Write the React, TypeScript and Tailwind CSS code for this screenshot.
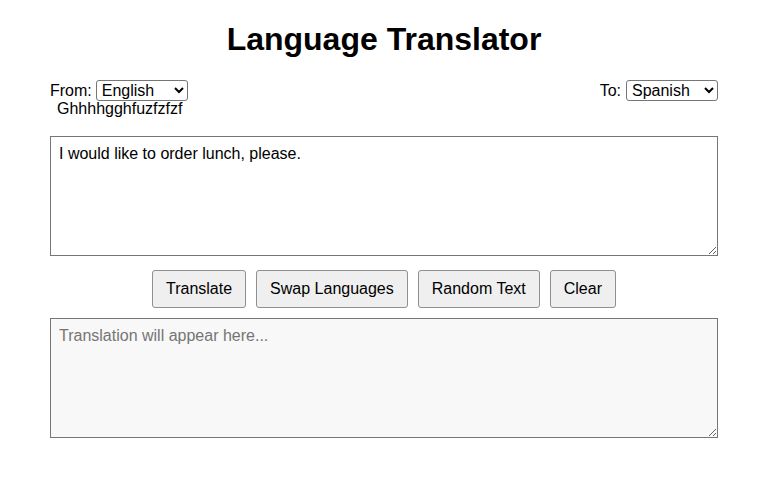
import React, { useState } from 'react';

const languages = ['English', 'Spanish', 'French', 'German', 'Italian'];

export default function App() {
  const [from, setFrom] = useState('English');
  const [to, setTo] = useState('Spanish');
  const [text, setText] = useState('I would like to order lunch, please.');
  const [output, setOutput] = useState('');

  const btn =
    'h-[38px] px-[13px] border border-[#8f8f8f] rounded-[3px] bg-[#efefef] text-[16px] text-black hover:bg-[#e5e5e5]';
  const sel =
    'h-[21px] border border-[#767676] rounded-[3px] bg-white text-[16px] leading-none pl-[1px] text-black';

  return (
    <div className="min-h-[480px] bg-white text-black px-[50px] pt-[21px] font-['Liberation_Sans',Arial,sans-serif]">
      <h1 className="text-center text-[32px] font-bold leading-[37px]">Language Translator</h1>

      <div className="mt-[22px] flex justify-between items-start">
        <div className="w-[140px] text-[16px] leading-[20px]">
          <label className="mr-[4px]">From:</label>
          <select className={`${sel} w-[92px]`} value={from} onChange={e => setFrom(e.target.value)}>
            {languages.map(l => (
              <option key={l}>{l}</option>
            ))}
          </select>
          <div className="ml-[7px] leading-[18px] mt-[-1px]">Ghhhhgghfuzfzfzf</div>
        </div>
        <div className="text-[16px] leading-[20px]">
          <label className="mr-[5px]">To:</label>
          <select className={`${sel} w-[92px]`} value={to} onChange={e => setTo(e.target.value)}>
            {languages.map(l => (
              <option key={l}>{l}</option>
            ))}
          </select>
        </div>
      </div>

      <textarea
        className="mt-[18px] block w-full h-[120px] border border-[#767676] p-[8px] text-[16px] leading-[18px] bg-white"
        value={text}
        onChange={e => setText(e.target.value)}
      />

      <div className="mt-[14px] flex justify-center gap-[10px]">
        <button className={btn} onClick={() => setOutput(text)}>Translate</button>
        <button
          className={btn}
          onClick={() => {
            setFrom(to);
            setTo(from);
          }}
        >
          Swap Languages
        </button>
        <button className={btn} onClick={() => setText('Where is the train station?')}>Random Text</button>
        <button
          className={btn}
          onClick={() => {
            setText('');
            setOutput('');
          }}
        >
          Clear
        </button>
      </div>

      <textarea
        readOnly
        placeholder="Translation will appear here..."
        className="mt-[10px] block w-full h-[120px] border border-[#767676] p-[8px] text-[16px] leading-[18px] bg-[#f8f8f8] placeholder:text-[#757575]"
        value={output}
      />
    </div>
  );
}
